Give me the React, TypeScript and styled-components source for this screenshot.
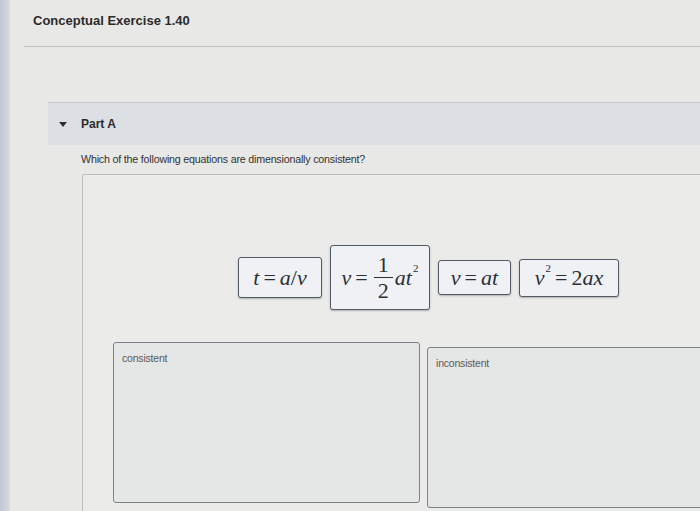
import * as React from 'react';
import styled, { createGlobalStyle } from 'styled-components';

const GlobalStyle = createGlobalStyle`
  html, body {
    margin: 0;
    padding: 0;
    background: #e8e8e6;
    overflow: hidden;
  }
  body {
    font-family: 'Liberation Sans', Arial, sans-serif;
  }
`;

const Page = styled.div`
  display: flex;
  width: 700px;
  height: 511px;
  overflow: hidden;
  background: #e8e8e6;
`;

const SideStrip = styled.div`
  flex: 0 0 9px;
  background: linear-gradient(90deg, #c3c8d1, #d4d8de);
  border-right: 1px solid #dcdcdc;
`;

const Main = styled.div`
  flex: 1;
  min-width: 0;
  display: flex;
  flex-direction: column;

  & > * {
    flex-shrink: 0;
  }
`;

const Header = styled.div`
  margin-left: 14px;
  height: 46px;
  padding-left: 9px;
  display: flex;
  align-items: flex-start;
  border-bottom: 1px solid #c4c4c4;
`;

const Title = styled.h1`
  margin: 13px 0 0;
  font-size: 13px;
  font-weight: bold;
  color: #2b2b2b;
`;

const Part = styled.section`
  margin-top: 55px;
  margin-left: 38px;
  display: flex;
  flex-direction: column;

  & > * {
    flex-shrink: 0;
  }
`;

const PartBar = styled.div`
  height: 42px;
  display: flex;
  align-items: center;
  gap: 14px;
  padding-left: 11px;
  background: #dcdfe4;
  border-top: 1px solid #c6c8cc;
`;

const Caret = styled.span`
  width: 0;
  height: 0;
  border-left: 4px solid transparent;
  border-right: 4px solid transparent;
  border-top: 5px solid #2f2f2f;
`;

const PartTitle = styled.span`
  font-size: 12px;
  font-weight: bold;
  color: #2b2b2b;
`;

const Question = styled.p`
  margin: 8px 0 9px 33px;
  font-size: 10.7px;
  color: #333;
  letter-spacing: -0.2px;
`;

const Workspace = styled.div`
  margin-left: 34px;
  width: 650px;
  height: 340px;
  background: #ebebea;
  border: 1px solid #bdbdbd;
  border-radius: 2px;
  display: flex;
  flex-direction: column;

  & > * {
    flex-shrink: 0;
  }
`;

const TopRow = styled.div`
  height: 40px;
  display: flex;
  justify-content: flex-end;
  align-items: flex-end;
  padding-right: 10px;
`;

const ResetButton = styled.div`
  width: 16px;
  height: 15px;
  border: 1px solid #8a8d92;
  border-radius: 2px;
  background: #f2f2f2;
`;

const TileRow = styled.div`
  margin-top: 30px;
  margin-left: 155px;
  display: flex;
  align-items: center;
  gap: 8px;
`;

const Tile = styled.div<{ $w: number; $h: number }>`
  width: ${p => p.$w}px;
  height: ${p => p.$h}px;
  box-sizing: border-box;
  display: flex;
  align-items: center;
  justify-content: center;
  background: #eff1f4;
  border: 1.5px solid #525a67;
  border-radius: 3px;
  box-shadow: 0 1px 2px rgba(0, 0, 0, 0.25);
  font-family: 'Liberation Serif', 'Times New Roman', serif;
  font-size: 22px;
  color: #2a2f38;
  white-space: nowrap;
`;

const V = styled.i`
  font-style: italic;
`;

const Op = styled.span`
  margin: 0 4px;
`;

const Sup = styled.span`
  position: relative;
  top: -10px;
  font-size: 11px;
  margin-left: 1px;
`;

const Fraction = styled.span`
  display: inline-flex;
  flex-direction: column;
  align-items: center;
  margin: 0 2px;
  line-height: 1;
`;

const Numer = styled.span`
  font-size: 22px;
  padding: 0 4px 1px;
  border-bottom: 1.2px solid #2a2f38;
`;

const Denom = styled.span`
  font-size: 22px;
  padding-top: 2px;
`;

const Zones = styled.div`
  margin-top: 32px;
  margin-left: 30px;
  display: flex;
  gap: 7px;
  align-items: flex-start;
`;

const Zone = styled.div<{ $w: number; $offset?: number }>`
  width: ${p => p.$w}px;
  height: 161px;
  flex: 0 0 auto;
  box-sizing: border-box;
  margin-top: ${p => p.$offset ?? 0}px;
  padding: 5px 8px;
  background: #e5e6e6;
  border: 1.5px solid #7c8087;
  border-radius: 3px;
`;

const ZoneLabel = styled.span`
  font-size: 10.5px;
  color: #5a5a5a;
  letter-spacing: -0.2px;
`;

export default function App() {
  return (
    <>
      <GlobalStyle />
      <Page>
        <SideStrip />
        <Main>
          <Header>
            <Title>Conceptual Exercise 1.40</Title>
          </Header>
          <Part>
            <PartBar>
              <Caret />
              <PartTitle>Part A</PartTitle>
            </PartBar>
            <Question>Which of the following equations are dimensionally consistent?</Question>
            <Workspace>
              <TopRow>
                <ResetButton />
              </TopRow>
              <TileRow>
                <Tile $w={84} $h={41}>
                  <V>t</V>
                  <Op>=</Op>
                  <V>a</V>/<V>v</V>
                </Tile>
                <Tile $w={100} $h={65}>
                  <V>v</V>
                  <Op>=</Op>
                  <Fraction>
                    <Numer>1</Numer>
                    <Denom>2</Denom>
                  </Fraction>
                  <V>at</V>
                  <Sup>2</Sup>
                </Tile>
                <Tile $w={73} $h={35}>
                  <V>v</V>
                  <Op>=</Op>
                  <V>at</V>
                </Tile>
                <Tile $w={100} $h={38}>
                  <V>v</V>
                  <Sup>2</Sup>
                  <Op>=</Op>
                  2<V>ax</V>
                </Tile>
              </TileRow>
              <Zones>
                <Zone $w={307}>
                  <ZoneLabel>consistent</ZoneLabel>
                </Zone>
                <Zone $w={300} $offset={5}>
                  <ZoneLabel>inconsistent</ZoneLabel>
                </Zone>
              </Zones>
            </Workspace>
          </Part>
        </Main>
      </Page>
    </>
  );
}
